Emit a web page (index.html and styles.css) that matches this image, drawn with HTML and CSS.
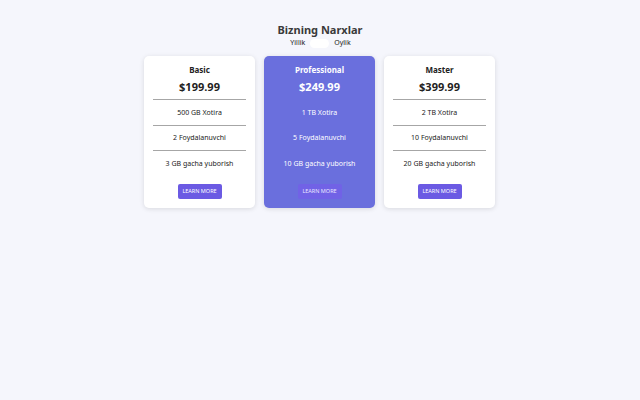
FILE: index.html
```html
<!DOCTYPE html>
<html lang="uz">
<head>
<meta charset="utf-8">
<title>Bizning Narxlar</title>
<link rel="stylesheet" href="styles.css">
</head>
<body>
<main class="page">
  <header class="header">
    <h1 class="title">Bizning Narxlar</h1>
    <div class="toggle">
      <span class="toggle-label">Yillik</span>
      <span class="switch"></span>
      <span class="toggle-label">Oylik</span>
    </div>
  </header>
  <section class="cards">
    <article class="card">
      <h2 class="plan">Basic</h2>
      <div class="price">$199.99</div>
      <ul class="features">
        <li>500 GB Xotira</li>
        <li>2 Foydalanuvchi</li>
        <li>3 GB gacha yuborish</li>
      </ul>
      <button class="btn">LEARN MORE</button>
    </article>
    <article class="card card-active">
      <h2 class="plan">Professional</h2>
      <div class="price">$249.99</div>
      <ul class="features">
        <li>1 TB Xotira</li>
        <li>5 Foydalanuvchi</li>
        <li>10 GB gacha yuborish</li>
      </ul>
      <button class="btn">LEARN MORE</button>
    </article>
    <article class="card">
      <h2 class="plan">Master</h2>
      <div class="price">$399.99</div>
      <ul class="features">
        <li>2 TB Xotira</li>
        <li>10 Foydalanuvchi</li>
        <li>20 GB gacha yuborish</li>
      </ul>
      <button class="btn">LEARN MORE</button>
    </article>
  </section>
</main>
</body>
</html>
```
FILE: styles.css
```css
html, body {
  margin: 0;
  padding: 0;
}
body {
  background: #f5f6fc;
  font-family: "Noto Sans", "Open Sans", sans-serif;
  color: #222;
  width: 640px;
  height: 400px;
}
.page {
  display: flex;
  flex-direction: column;
  align-items: center;
  padding-top: 22px;
}
.header {
  display: flex;
  flex-direction: column;
  align-items: center;
}
.title {
  margin: 0;
  font-size: 11px;
  line-height: 16px;
  font-weight: 700;
  color: #3a3a3a;
}
.toggle {
  display: flex;
  align-items: center;
  gap: 5px;
  height: 10px;
  margin-left: 1px;
}
.toggle-label {
  font-size: 7px;
  line-height: 10px;
  color: #222;
}
.switch {
  width: 19px;
  height: 9px;
  background: #ffffff;
  border-radius: 5px;
}
.cards {
  display: flex;
  gap: 9px;
  margin-top: 8px;
  margin-right: 1px;
}
.card {
  width: 111px;
  height: 152px;
  box-sizing: border-box;
  background: #ffffff;
  border-radius: 5px;
  box-shadow: 0 1px 5px rgba(0, 0, 0, 0.12);
  padding: 8px 9px 9px;
  display: flex;
  flex-direction: column;
  align-items: center;
  text-align: center;
}
.card-active {
  background: #6a6fdd;
  color: #ffffff;
}
.plan {
  margin: 0;
  font-size: 8px;
  line-height: 12px;
  font-weight: 700;
}
.price {
  margin-top: 3px;
  font-size: 11px;
  line-height: 16px;
  font-weight: 700;
}
.features {
  list-style: none;
  margin: 4px 0 0;
  padding: 0;
  width: 100%;
}
.features li {
  border-top: 1px solid #a6a6a6;
  height: 25.5px;
  box-sizing: border-box;
  display: flex;
  align-items: center;
  justify-content: center;
  font-size: 7px;
}
.card-active .features li {
  border-top-color: #6a6fdd;
}
.btn {
  margin-top: 8px;
  width: 44px;
  height: 16px;
  border: none;
  border-radius: 2px;
  background: #6b5ae3;
  color: #ffffff;
  font-family: "Noto Sans", "Open Sans", sans-serif;
  font-size: 5.5px;
  padding: 0;
}
.card-active .btn {
  background: #7162e6;
  color: #e8e6ff;
}
```
